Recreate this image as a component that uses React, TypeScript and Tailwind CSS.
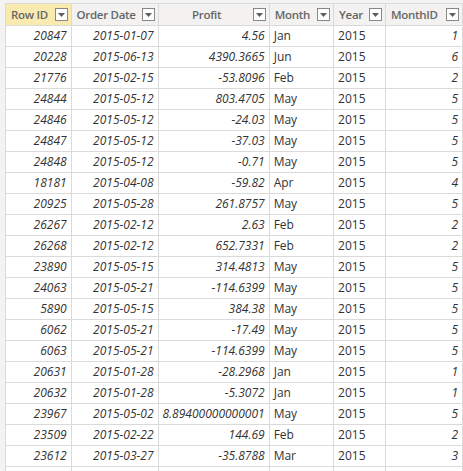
import { type ReactNode } from 'react';

type Row = [number, string, string, string, number];

const rows: Row[] = [
  [20847, '2015-01-07', '4.56', 'Jan', 1],
  [20228, '2015-06-13', '4390.3665', 'Jun', 6],
  [21776, '2015-02-15', '-53.8096', 'Feb', 2],
  [24844, '2015-05-12', '803.4705', 'May', 5],
  [24846, '2015-05-12', '-24.03', 'May', 5],
  [24847, '2015-05-12', '-37.03', 'May', 5],
  [24848, '2015-05-12', '-0.71', 'May', 5],
  [18181, '2015-04-08', '-59.82', 'Apr', 4],
  [20925, '2015-05-28', '261.8757', 'May', 5],
  [26267, '2015-02-12', '2.63', 'Feb', 2],
  [26268, '2015-02-12', '652.7331', 'Feb', 2],
  [23890, '2015-05-15', '314.4813', 'May', 5],
  [24063, '2015-05-21', '-114.6399', 'May', 5],
  [5890, '2015-05-15', '384.38', 'May', 5],
  [6062, '2015-05-21', '-17.49', 'May', 5],
  [6063, '2015-05-21', '-114.6399', 'May', 5],
  [20631, '2015-01-28', '-28.2968', 'Jan', 1],
  [20632, '2015-01-28', '-5.3072', 'Jan', 1],
  [23967, '2015-05-02', '8.89400000000001', 'May', 5],
  [23509, '2015-02-22', '144.69', 'Feb', 2],
  [23612, '2015-03-27', '-35.8788', 'Mar', 3],
];

const columns = [
  { name: 'Row ID', width: 'w-[67px]', active: true },
  { name: 'Order Date', width: 'w-[88px]' },
  { name: 'Profit', width: 'w-[103px]', center: true },
  { name: 'Month', width: 'w-[66px]' },
  { name: 'Year', width: 'w-[53px]' },
  { name: 'MonthID', width: 'w-[79px]' },
];

function FilterButton() {
  return (
    <span className="w-[13px] h-[13px] border border-[#8a8886] bg-white flex items-center justify-center shrink-0">
      <svg width="7" height="4" viewBox="0 0 7 4">
        <path d="M0 0 L7 0 L3.5 4 Z" fill="#605e5c" />
      </svg>
    </span>
  );
}

function Cell({ children, right, italic }: { children: ReactNode, right?: boolean, italic?: boolean }) {
  return (
    <td
      className={`h-[21px] border border-[#dadada] px-[4px] py-0 whitespace-nowrap text-[#333] ${right ? 'text-right' : 'text-left'} ${italic ? 'italic' : ''}`}
    >
      {children}
    </td>
  );
}

export default function App() {
  return (
    <div
      className="w-[463px] h-[471px] overflow-hidden bg-[#f3f3f3] pt-[3px] pl-[5px] text-[12px] leading-none"
      style={{ fontFamily: '"Segoe UI", "Open Sans", sans-serif' }}
    >
      <table className="border-collapse table-fixed bg-white">
        <thead>
          <tr>
            {columns.map(col => (
              <th
                key={col.name}
                className={`${col.width} h-[21px] border border-[#dadada] p-0 font-semibold text-[11.5px] tracking-[-0.3px] text-[#666] ${col.active ? 'bg-[#f9ebb0]' : 'bg-[#f3f2f1]'}`}
              >
                <div className="flex items-center h-[21px] pl-[5px] pr-[3px] gap-[3px]">
                  <span className={`grow whitespace-nowrap ${col.center ? 'text-center' : 'text-left'}`}>{col.name}</span>
                  <FilterButton />
                </div>
              </th>
            ))}
          </tr>
        </thead>
        <tbody>
          {rows.map(r => (
            <tr key={r[0]}>
              <Cell right italic>{r[0]}</Cell>
              <Cell right italic>{r[1]}</Cell>
              <Cell right italic>{r[2]}</Cell>
              <Cell>{r[3]}</Cell>
              <Cell>2015</Cell>
              <Cell right italic>{r[4]}</Cell>
            </tr>
          ))}
          <tr>
            <Cell>{''}</Cell>
            <Cell>{''}</Cell>
            <Cell>{''}</Cell>
            <Cell>{''}</Cell>
            <Cell>{''}</Cell>
            <Cell>{''}</Cell>
          </tr>
        </tbody>
      </table>
    </div>
  );
}
